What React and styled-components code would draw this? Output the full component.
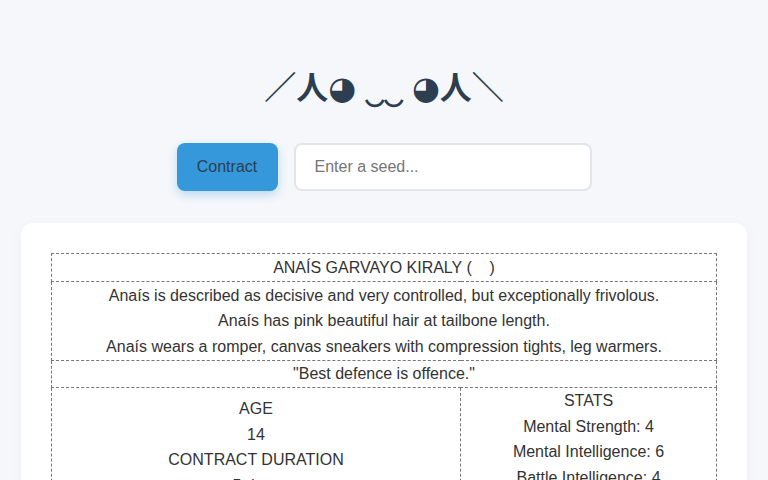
import React from 'react';
import styled, { createGlobalStyle } from 'styled-components';

const GlobalStyle = createGlobalStyle`
    body {
        margin: 0;
        background: #f5f7fa;
        font-family: "Liberation Sans", Arial, sans-serif;
        color: #333;
    }
`

const Page = styled.div`
    padding: 66px 21px 40px 21px;
`

const Title = styled.h1`
    margin: 0 0 33px 0;
    text-align: center;
    font-size: 32px;
    font-weight: bold;
    color: #2c3e50;
    font-family: "Liberation Sans", "Noto Sans CJK JP", sans-serif;
    line-height: 44px;
`

const Eye = styled.span`
    font-family: "DejaVu Sans", sans-serif;
`

const Controls = styled.div`
    display: flex;
    justify-content: center;
    align-items: center;
    gap: 16px;
    margin-bottom: 32px;
`

const ContractButton = styled.button`
    width: 101px;
    height: 48px;
    border: none;
    border-radius: 8px;
    background: #3498db;
    color: #2c3e50;
    font-size: 16px;
    font-family: inherit;
    box-shadow: 0 4px 10px rgba(52, 152, 219, 0.3);
    cursor: pointer;
`

const SeedInput = styled.input`
    width: 298px;
    height: 48px;
    box-sizing: border-box;
    padding: 0 19px;
    border: 2px solid #e2e5e9;
    border-radius: 8px;
    font-size: 16px;
    font-family: inherit;
    background: white;
    color: #333;
    &::placeholder {
        color: #757575;
    }
`

const Card = styled.div`
    background: white;
    border-radius: 12px;
    padding: 30px;
    box-shadow: 0 2px 12px rgba(0, 0, 0, 0.04);
`

const Sheet = styled.table`
    width: 100%;
    border-collapse: collapse;
    border: 1px dashed #aaa;
    text-align: center;
    font-size: 16px;
    line-height: 25.6px;
`

const Cell = styled.td`
    border: 1px dashed #777;
    padding: ${p => p.$pad || 0}px 0;
    vertical-align: ${p => p.$top ? 'top' : 'middle'};
    padding-top: ${p => p.$shift || p.$pad || 0}px;
    width: ${p => p.$width || 'auto'};
`

const Line = styled.div``

const description = [
    'Anaís is described as decisive and very controlled, but exceptionally frivolous.',
    'Anaís has pink beautiful hair at tailbone length.',
    'Anaís wears a romper, canvas sneakers with compression tights, leg warmers.',
]

const profile = ['AGE', '14', 'CONTRACT DURATION', '5 days']

const stats = [
    'STATS',
    'Mental Strength: 4',
    'Mental Intelligence: 6',
    'Battle Intelligence: 4',
    'Physical Strength: 5',
]

const App = () => {
    return (
        <>
            <GlobalStyle />
            <Page>
                <Title>／人<Eye>◕</Eye> ‿‿ <Eye>◕</Eye>人＼</Title>
                <Controls>
                    <ContractButton>Contract</ContractButton>
                    <SeedInput type="text" placeholder="Enter a seed..." />
                </Controls>
                <Card>
                    <Sheet>
                        <tbody>
                            <tr>
                                <Cell colSpan={2} $shift={1}>ANAÍS GARVAYO KIRALY ( &nbsp;&nbsp; )</Cell>
                            </tr>
                            <tr>
                                <Cell colSpan={2} $pad={1}>
                                    {description.map(d => <Line key={d}>{d}</Line>)}
                                </Cell>
                            </tr>
                            <tr>
                                <Cell colSpan={2}>"Best defence is offence."</Cell>
                            </tr>
                            <tr>
                                <Cell $top $shift={8} $width="408px">
                                    {profile.map(p => <Line key={p}>{p}</Line>)}
                                </Cell>
                                <Cell $top>
                                    {stats.map(s => <Line key={s}>{s}</Line>)}
                                </Cell>
                            </tr>
                        </tbody>
                    </Sheet>
                </Card>
            </Page>
        </>
    )
}

export default App;
